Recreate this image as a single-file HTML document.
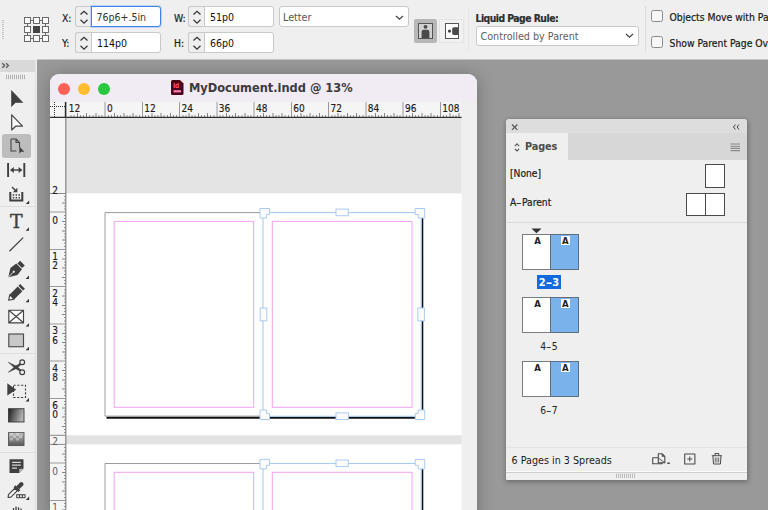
<!DOCTYPE html>
<html>
<head>
<meta charset="utf-8">
<title>MyDocument.indd</title>
<style>
*{box-sizing:border-box;margin:0;padding:0}
html,body{width:768px;height:510px;overflow:hidden;background:#999;font-family:"DejaVu Sans Condensed","DejaVu Sans","Liberation Sans",sans-serif;color:#222}
.abs{position:absolute}
#top{position:absolute;left:0;top:0;width:768px;height:59px;background:#efefef;border-bottom:1px solid #c6c6c6;box-sizing:content-box}
.lbl{position:absolute;font-size:10.300px;color:#1a1a1a;-webkit-text-stroke:.2px #1a1a1a;line-height:13px;white-space:nowrap}
.step{position:absolute;width:17px;height:21px;border:1px solid #c9c9c9;border-right:none;border-radius:3px 0 0 3px;background:#efefef}
.inp{position:absolute;height:21px;border:1px solid #c9c9c9;border-radius:0 3px 3px 0;background:#fff;font-size:10.500px;line-height:20px;padding-left:5px;color:#333;white-space:nowrap}
.sel{position:absolute;height:21px;border:1px solid #c9c9c9;border-radius:3px;background:#fff;font-size:10.700px;line-height:19px;padding-left:5px;color:#555;white-space:nowrap}
.vsep{position:absolute;width:1px;background:#dcdcdc}
.cb{position:absolute;width:12px;height:12px;border:1px solid #8a8a8a;border-radius:2.500px;background:#f7f7f7}
#tools{position:absolute;left:0;top:58px;width:37px;height:452px;background:#efefef}
#doc{position:absolute;left:50px;top:74px;width:426.500px;height:446px;background:#efefef;border-radius:9px 9px 0 0;overflow:hidden;box-shadow:0 2px 18px rgba(0,0,0,.27)}
#title{position:absolute;left:0;top:0;width:427px;height:28px;background:#f1ebf3}
.tl{position:absolute;top:8.700px;width:12px;height:12px;border-radius:50%}
#panel{position:absolute;left:506px;top:119px;width:241px;height:361px;background:#efefef;border-radius:3.500px 3.500px 1px 1px;overflow:hidden;box-shadow:.5px 1.500px 5px rgba(0,0,0,.3)}
#pin{position:absolute;left:0;top:.5px;width:241px;height:360px}
.pa{position:absolute;width:15px;text-align:center;font-size:9.500px;font-weight:bold;color:#222;line-height:11px}
.hy{display:inline-block;transform:scaleX(1.600);margin:0 1.200px}
</style>
</head>
<body>
<!-- TOPBAR -->

<div id="top">
  <!-- grip -->
  <svg class="abs" style="left:0;top:0" width="60" height="58" viewBox="0 0 60 58">
    <g fill="#c4c4c4"><rect x="2" y="20" width="2" height="1"/><rect x="2" y="22" width="2" height="1"/><rect x="2" y="24" width="2" height="1"/><rect x="2" y="26" width="2" height="1"/><rect x="2" y="28" width="2" height="1"/><rect x="2" y="30" width="2" height="1"/><rect x="2" y="32" width="2" height="1"/><rect x="2" y="34" width="2" height="1"/><rect x="2" y="36" width="2" height="1"/><rect x="2" y="38" width="2" height="1"/></g>
    <g fill="none" stroke="#6a6a6a" stroke-width="1">
      <path d="M27 20.5H46M27 38.5H46M27.5 20V38M45.5 20V38"/>
    </g>
    <g fill="#fafafa" stroke="#6a6a6a" stroke-width="1">
      <rect x="24.5" y="17.500" width="6" height="6"/><rect x="33.500" y="17.500" width="6" height="6"/><rect x="42.500" y="17.500" width="6" height="6"/>
      <rect x="24.5" y="26.500" width="6" height="6"/><rect x="42.500" y="26.500" width="6" height="6"/>
      <rect x="24.5" y="35.500" width="6" height="6"/><rect x="33.500" y="35.500" width="6" height="6"/><rect x="42.500" y="35.500" width="6" height="6"/>
    </g>
    <rect x="33" y="26" width="7" height="7" fill="#444"/>
  </svg>
  <div class="lbl" style="left:62px;top:12px">X:</div>
  <div class="lbl" style="left:62px;top:37px">Y:</div>
  <div class="step" style="left:75px;top:6px"><svg width="16" height="19" viewBox="0 0 16 19"><path d="M4.500 7.500L8 4.200L11.500 7.500M4.500 12.800L8 16.100L11.500 12.800" fill="none" stroke="#333" stroke-width="1.200"/></svg></div>
  <div class="inp" style="left:91px;top:6px;width:70px;border:1.500px solid #3b83e8;box-shadow:0 0 0 1px rgba(59,131,232,.25);line-height:20.500px;padding-left:4.500px">76p6+.5in</div>
  <div class="step" style="left:75px;top:32px"><svg width="16" height="19" viewBox="0 0 16 19"><path d="M4.500 7.500L8 4.200L11.500 7.500M4.500 12.800L8 16.100L11.500 12.800" fill="none" stroke="#333" stroke-width="1.200"/></svg></div>
  <div class="inp" style="left:91px;top:32px;width:70px;color:#111">114p0</div>
  <div class="lbl" style="left:174px;top:12px">W:</div>
  <div class="lbl" style="left:174px;top:37px">H:</div>
  <div class="step" style="left:187.500px;top:6px"><svg width="16" height="19" viewBox="0 0 16 19"><path d="M4.500 7.500L8 4.200L11.500 7.500M4.500 12.800L8 16.100L11.500 12.800" fill="none" stroke="#333" stroke-width="1.200"/></svg></div>
  <div class="inp" style="left:204px;top:6px;width:70px;color:#111">51p0</div>
  <div class="step" style="left:187.500px;top:32px"><svg width="16" height="19" viewBox="0 0 16 19"><path d="M4.500 7.500L8 4.200L11.500 7.500M4.500 12.800L8 16.100L11.500 12.800" fill="none" stroke="#333" stroke-width="1.200"/></svg></div>
  <div class="inp" style="left:204px;top:32px;width:70px;color:#111">66p0</div>
  <div class="sel" style="left:279px;top:6px;width:129.500px;padding-left:3px;line-height:21px">Letter<svg class="abs" style="right:3.500px;top:8px" width="9" height="6" viewBox="0 0 9 6"><path d="M1 1L4.500 4.300L8 1" fill="none" stroke="#444" stroke-width="1.200"/></svg></div>
  <!-- orientation buttons -->
  <div class="abs" style="left:414px;top:19px;width:23px;height:24px;background:#b7b7b7;border-radius:2px"></div>
  <div class="abs" style="left:439px;top:19px;width:25px;height:24px;border:1px solid #e4e4e4;background:#f1f1f1"></div>
  <svg class="abs" style="left:410px;top:15px" width="60" height="32" viewBox="410 15 60 32">
    <rect x="418.500" y="23.500" width="14" height="15" fill="#d2d2d2" stroke="#555" stroke-width="1"/>
    <circle cx="425.500" cy="26.800" r="1.900" fill="#4a4a4a"/>
    <path d="M421.600 38V31.700Q421.600 29.800 423.600 29.800H427.400Q429.400 29.800 429.400 31.700V38Z" fill="#4a4a4a"/>
    <rect x="445.500" y="23.500" width="13" height="15" fill="#fff" stroke="#555" stroke-width="1"/>
    <circle cx="449.500" cy="31.100" r="1.700" fill="#4a4a4a"/>
    <path d="M458 27.300H453.800Q452.200 27.300 452.200 29V33.200Q452.200 34.900 453.800 34.900H458Z" fill="#4a4a4a"/>
  </svg>
  <div class="vsep" style="left:468px;top:8px;height:44px;background:#e6e6e6"></div>
  <div class="lbl" style="left:475.500px;top:12px;font-weight:bold;font-size:10.300px;letter-spacing:-.5px;color:#303030">Liquid Page Rule:</div>
  <div class="sel" style="left:475.500px;top:25.500px;width:163.500px;height:20.500px;line-height:19.500px;padding-left:4px;color:#5e5e5e">Controlled by Parent<svg class="abs" style="right:4px;top:6.500px" width="9" height="6" viewBox="0 0 9 6"><path d="M1 1L4.500 4.300L8 1" fill="none" stroke="#444" stroke-width="1.200"/></svg></div>
  <div class="vsep" style="left:644.500px;top:6px;height:46px"></div>
  <div class="cb" style="left:651px;top:10px"></div>
  <div class="cb" style="left:651px;top:36px"></div>
  <div class="lbl" style="left:669.500px;top:10.500px;font-size:10.300px">Objects Move with Parent</div>
  <div class="lbl" style="left:669.500px;top:36.500px;font-size:10.300px">Show Parent Page Overlay</div>
</div>

<!-- TOOLS -->

<div id="tools">
<div class="abs" style="left:0;top:2px;width:36px;height:11.500px;background:#d9d9d9"></div>
<div class="abs" style="left:35px;top:2px;width:1px;height:450px;background:#e1e1e1"></div>
<div class="abs" style="left:1.500px;top:76px;width:29.500px;height:23.500px;background:#bdbdbd;border-radius:2.500px"></div>
<div class="abs" style="left:0;top:148px;width:36px;height:1px;background:#dedede"></div>
<div class="abs" style="left:0;top:295px;width:36px;height:1px;background:#dedede"></div>
<div class="abs" style="left:0;top:394px;width:36px;height:1px;background:#dedede"></div>
<svg class="abs" style="left:0;top:0" width="37" height="452" viewBox="0 58 37 452">
  <defs>
    <linearGradient id="g1" x1="0" y1="0" x2="1" y2="0.250"><stop offset="0" stop-color="#1c1c1c"/><stop offset="1" stop-color="#b4b4b4"/></linearGradient>
    <linearGradient id="g2" x1="0" y1="0" x2="0" y2="1"><stop offset="0" stop-color="#c4c4c4"/><stop offset="1" stop-color="#555"/></linearGradient>
  </defs>
  <!-- >> -->
  <path d="M2.300 63.200L4.700 65.500L2.300 67.800M6.100 63.200L8.500 65.500L6.100 67.800" fill="none" stroke="#555" stroke-width="1.200"/>
  <!-- grip -->
  <g stroke="#b0b0b0" stroke-width="1"><path d="M6.500 74.700V79.200M8.500 74.700V79.200M10.500 74.700V79.200M12.500 74.700V79.200M14.500 74.700V79.200M16.500 74.700V79.200M18.500 74.700V79.200M20.500 74.700V79.200M22.500 74.700V79.200M24.500 74.700V79.200"/></g>
  <!-- selection -->
  <path d="M11.500 90.500V106.500L15.600 102.500H22.800Z" fill="#3f3f3f" stroke="#3f3f3f" stroke-width=".6" stroke-linejoin="round"/>
  <!-- direct selection -->
  <path d="M11.700 114.800V130L15.700 126.200H22.500Z" fill="#fbfbfb" stroke="#444" stroke-width="1.200" stroke-linejoin="round"/>
  <!-- page tool -->
  <path d="M11 139H16L19.500 142.500V147M16 139V142.500H19.500M11 139V151H16.500" fill="none" stroke="#444" stroke-width="1.100"/>
  <path d="M19.300 146.300V153.600L21.200 151.800H24.300Z" fill="#3f3f3f"/>
  <!-- gap tool -->
  <path d="M8.100 163V177M24.300 163V177" stroke="#3f3f3f" stroke-width="1.900"/>
  <path d="M11.500 170H21" stroke="#3f3f3f" stroke-width="1.400"/>
  <path d="M10 170L13.800 166.900V173.100ZM22.400 170L18.600 166.900V173.100Z" fill="#3f3f3f"/>
  <!-- content collector -->
  <path d="M10.300 192V200.500H22.300V192" fill="none" stroke="#3f3f3f" stroke-width="2"/>
  <path d="M12.700 194.200h1.500v1.500h-1.500zM15.600 194.200h1.500v1.500h-1.500zM18.500 194.200h1.500v1.500h-1.500zM12.700 197h1.500v1.500h-1.500zM15.600 197h1.500v1.500h-1.500zM18.500 197h1.500v1.500h-1.500z" fill="#3f3f3f"/>
  <path d="M12 187L16 191" stroke="#3f3f3f" stroke-width="1.500"/>
  <path d="M17.300 187.800V192.200H12.900Z" fill="#3f3f3f"/>
  <path d="M29.2 200.5V203.9H25.8Z" fill="#333"/>
  <!-- T -->
  <text x="16.300" y="227.600" text-anchor="middle" font-family="'DejaVu Serif','Liberation Serif',serif" font-size="19" fill="#3f3f3f" stroke="#3f3f3f" stroke-width=".35">T</text>
  <path d="M29.0 227.3V230.7H25.6Z" fill="#333"/>
  <!-- line -->
  <path d="M9.400 251.300L23.200 237.600" stroke="#3f3f3f" stroke-width="1.200"/>
  <!-- pen -->
  <g transform="translate(15 270.500) rotate(45)">
    <rect x="-3.300" y="-10.500" width="6.600" height="3.800" fill="#3f3f3f"/>
    <path d="M-4 -5.800H4L5 1.500L0 9.500L-5 1.500Z" fill="#3f3f3f"/>
    <path d="M0 9.500V2.500" stroke="#efefef" stroke-width=".9"/>
    <circle cx="0" cy="1.700" r="1.100" fill="#efefef"/>
  </g>
  <path d="M29.0 275.5V278.9H25.6Z" fill="#333"/>
  <!-- pencil -->
  <g transform="translate(15.600 293.300) rotate(45) scale(.95)">
    <path d="M-3.500 -10.300H3.500V-7.600H-3.500Z" fill="#3f3f3f"/>
    <path d="M-3.500 -6.600H3.500V5.500H-3.500Z" fill="#3f3f3f"/>
    <path d="M-3.200 5.500H3.200L0 10.300Z" fill="#f4f4f4" stroke="#3f3f3f" stroke-width="1.200" stroke-linejoin="round"/>
  </g>
  <path d="M29.0 298.8V302.2H25.6Z" fill="#333"/>
  <!-- rect frame -->
  <path d="M8.800 310.200H23.500V322.800H8.800ZM8.800 310.200L23.500 322.800M23.500 310.200L8.800 322.800" fill="#fafafa" stroke="#444" stroke-width="1.150"/>
  <path d="M29.0 323.2V326.6H25.6Z" fill="#333"/>
  <!-- rectangle -->
  <rect x="8.800" y="334" width="14.700" height="12.700" fill="#c8c8c8" stroke="#4c4c4c" stroke-width="1.150"/>
  <path d="M29.0 346.8V350.2H25.6Z" fill="#333"/>
  <!-- scissors -->
  <path d="M8.300 362.300L16.500 366.200L20.900 369.900L19.900 371.100L15.300 368.400Z" fill="#3f3f3f" stroke="#3f3f3f" stroke-width=".5" stroke-linejoin="round"/><path d="M8.300 372.300L16.500 368.400L20.900 364.700L19.900 363.500L15.300 366.200Z" fill="#3f3f3f" stroke="#3f3f3f" stroke-width=".5" stroke-linejoin="round"/>
  <circle cx="22.200" cy="362.300" r="2.400" fill="#f4f4f4" stroke="#3f3f3f" stroke-width="1.200"/>
  <circle cx="22.200" cy="372.300" r="2.400" fill="#f4f4f4" stroke="#3f3f3f" stroke-width="1.200"/>
  <!-- free transform -->
  <rect x="13.500" y="385.200" width="12" height="12.300" fill="none" stroke="#3f3f3f" stroke-width="1.100" stroke-dasharray="2.200 1.600"/>
  <path d="M7.300 383.200V395.600L16.200 389.700Z" fill="#3f3f3f"/>
  <path d="M29.0 398V401.4H25.6Z" fill="#333"/>
  <!-- gradient -->
  <rect x="8.500" y="408.700" width="15.500" height="13.300" fill="url(#g1)" stroke="#3a3a3a" stroke-width=".9"/>
  <!-- gradient feather -->
  <rect x="8.500" y="432.600" width="15.500" height="13" fill="url(#g2)" stroke="#555" stroke-width=".9"/>
  <path d="M10 433h3v2.500h-3zM16 433h3v2.500h-3zM13 435.500h3v2.500h-3zM19 435.500h3v2.500h-3zM10 438h3v2.500h-3zM16 438h3v2.500h-3z" fill="#fff" opacity=".35"/>
  <!-- note -->
  <path d="M9.500 459.200H23.500V468.700L19.200 473.100H9.500Z" fill="#3f3f3f"/>
  <path d="M12 462.300H20.800M12 465.200H20.800M12 468.100H17" stroke="#d6d6d6" stroke-width="1.300"/>
  <path d="M19.200 473.100V468.700H23.500Z" fill="#b4b4b4"/>
  <!-- eyedropper -->
  <g transform="translate(14.900 490.700) rotate(45) scale(.87)">
    <path d="M-2 -2V8.500L0 11L2 8.500V-2Z" fill="#f6f6f6" stroke="#3f3f3f" stroke-width="1.300" stroke-linejoin="round"/>
    <rect x="-3.900" y="-4.800" width="7.800" height="3" fill="#3f3f3f"/>
    <path d="M-2.400 -10.800Q-2.400 -13 0 -13Q2.400 -13 2.400 -10.800V-4.600H-2.400Z" fill="#3f3f3f"/>
  </g>
  <rect x="16.200" y="494.200" width="9.300" height="4" fill="#3f3f3f"/>
  <path d="M17.200 495.200h1.800v2h-1.800zM20 495.200h1.800v2h-1.800zM22.800 495.200h1.800v2h-1.800z" fill="#e8e8e8"/>
  <path d="M29.2 496.5V499.9H25.8Z" fill="#333"/>
  <!-- hand -->
  <path d="M13.500 510V508M16 510V506.500M18.500 510V507.200M21 510V508.500" stroke="#3f3f3f" stroke-width="1.300"/>
</svg>
</div>

<!-- DOC -->
<div id="doc">
<div id="title">
  <div class="tl" style="left:8.200px;background:#fe5f57"></div>
  <div class="tl" style="left:28.200px;background:#febc2e"></div>
  <div class="tl" style="left:48px;background:#28c840"></div>
  <svg class="abs" style="left:121px;top:6px" width="13" height="15" viewBox="0 0 13 15"><path d="M1.500 0H9L12.500 3.500V13.500Q12.500 15 11 15H1.500Q0 15 0 13.500V1.500Q0 0 1.500 0Z" fill="#4b0420"/><text x="2.200" y="8" font-size="6.500" font-weight="bold" fill="#ff5fa2" font-family="'Liberation Sans',sans-serif">Id</text><rect x="2.500" y="10.200" width="7.500" height="2.200" fill="#ff7fb5"/></svg>
  <div class="abs" style="left:139px;top:6px;font-size:12.700px;font-weight:bold;color:#3c3a3d;line-height:16px;white-space:nowrap">MyDocument.indd @ 13%</div>
</div>
<svg class="abs" style="left:0;top:0" width="426" height="436" viewBox="50 74 426 436" font-family="'DejaVu Sans Condensed','DejaVu Sans','Liberation Sans',sans-serif">
<rect x="66" y="117" width="395.600" height="393" fill="#fff"/>
<rect x="66" y="117" width="395.600" height="76.400" fill="#e4e4e4"/>
<rect x="66" y="435.300" width="395.600" height="9" fill="#e2e2e2"/>
<rect x="50" y="102" width="411.600" height="15.500" fill="#f5f5f5"/>
<rect x="50" y="117" width="16" height="393" fill="#f5f5f5"/>
<path d="M71 115V117M74 115V117M80.5 115V117M83.5 115V117M89.5 115V117M93 115V117M99 115V117M102 115V117M108.5 115V117M111.5 115V117M117.5 115V117M120.5 115V117M127 115V117M130 115V117M136 115V117M139.5 115V117M145.5 115V117M148.5 115V117M155 115V117M158 115V117M164 115V117M167.5 115V117M173.5 115V117M176.5 115V117M183 115V117M186 115V117M192 115V117M195 115V117M201.5 115V117M204.5 115V117M210.5 115V117M214 115V117M220 115V117M223 115V117M229.5 115V117M232.5 115V117M238.5 115V117M242 115V117M248 115V117M251 115V117M257.5 115V117M260.5 115V117M266.5 115V117M269.5 115V117M276 115V117M279 115V117M285 115V117M288.5 115V117M294.5 115V117M297.5 115V117M304 115V117M307 115V117M313 115V117M316.5 115V117M322.5 115V117M325.5 115V117M332 115V117M335 115V117M341 115V117M344 115V117M350.5 115V117M353.5 115V117M359.5 115V117M363 115V117M369 115V117M372 115V117M378.5 115V117M381.5 115V117M387.5 115V117M391 115V117M397 115V117M400 115V117M406.5 115V117M409.5 115V117M415.5 115V117M418.5 115V117M425 115V117M428 115V117M434 115V117M437.5 115V117M443.5 115V117M446.5 115V117M453 115V117M456 115V117" stroke="#7a7a7a" stroke-width=".8"/>
<path d="M77.5 113V117M86.5 113V117M96 113V117M114.5 113V117M124 113V117M133 113V117M152 113V117M161 113V117M170.5 113V117M189 113V117M198.5 113V117M207.5 113V117M226.5 113V117M235.5 113V117M245 113V117M263.5 113V117M273 113V117M282 113V117M301 113V117M310 113V117M319.5 113V117M338 113V117M347.5 113V117M356.5 113V117M375.5 113V117M384.5 113V117M394 113V117M412.5 113V117M422 113V117M431 113V117M450 113V117M459 113V117" stroke="#777" stroke-width=".9"/>
<path d="M105 102V117M142.5 102V117M179.5 102V117M217 102V117M254 102V117M291.5 102V117M328.5 102V117M366 102V117M403 102V117M440.5 102V117" stroke="#9a9a9a" stroke-width="1"/>
<g font-size="10" fill="#1c1c1c" stroke="#1c1c1c" stroke-width=".15">
<text x="68.700" y="111.700">12</text>
<text x="107.1" y="111.700">0</text>
<text x="144.35" y="111.700">12</text>
<text x="181.6" y="111.700">24</text>
<text x="218.85" y="111.700">36</text>
<text x="256.1" y="111.700">48</text>
<text x="293.35" y="111.700">60</text>
<text x="330.6" y="111.700">72</text>
<text x="367.85" y="111.700">84</text>
<text x="405.1" y="111.700">96</text>
<text x="442.35" y="111.700">108</text>
</g>
<path d="M64 196.5H66M64 200H66M64 206H66M64 209H66M64 215.5H66M64 218.5H66M64 224.5H66M64 227.5H66M64 234H66M64 237H66M64 243H66M64 246.5H66M64 252.5H66M64 255.5H66M64 262H66M64 265H66M64 271H66M64 274.5H66M64 280.5H66M64 283.5H66M64 290H66M64 293H66M64 299H66M64 302H66M64 308.5H66M64 311.5H66M64 317.5H66M64 321H66M64 327H66M64 330H66M64 336.5H66M64 339.5H66M64 345.5H66M64 349H66M64 355H66M64 358H66M64 364.5H66M64 367.5H66M64 373.5H66M64 376.5H66M64 383H66M64 386H66M64 392H66M64 395.5H66M64 401.5H66M64 404.5H66M64 411H66M64 414H66M64 420H66M64 423.5H66M64 429.5H66M64 432.5H66" stroke="#7a7a7a" stroke-width=".8"/>
<path d="M62 203H66M62 221.5H66M62 231H66M62 240H66M62 259H66M62 268H66M62 277.5H66M62 296H66M62 305.5H66M62 314.5H66M62 333.5H66M62 342.5H66M62 352H66M62 370.5H66M62 380H66M62 389H66M62 408H66M62 417H66M62 426.5H66" stroke="#777" stroke-width=".9"/>
<path d="M50 212H66M50 249.5H66M50 286.5H66M50 324H66M50 361H66M50 398.5H66" stroke="#9a9a9a" stroke-width="1"/>
<path d="M64 447.5H66M64 451H66M64 457H66M64 460H66M64 466.5H66M64 469.5H66M64 475.5H66M64 478.5H66M64 485H66M64 488H66M64 494H66M64 497.5H66M64 503.5H66M64 506.5H66" stroke="#7a7a7a" stroke-width=".8"/>
<path d="M62 454H66M62 472.5H66M62 482H66M62 491H66M62 510H66" stroke="#777" stroke-width=".9"/>
<path d="M50 463H66M50 500.5H66" stroke="#9a9a9a" stroke-width="1"/>
<path d="M50 193.500H66M50 435.300H66M50 444.400H66" stroke="#8a8a8a" stroke-width="1"/>
<g font-size="10" fill="#1c1c1c" stroke="#1c1c1c" stroke-width=".15" text-anchor="middle">
<text x="55.200" y="193.8">2</text>
<text x="55.200" y="444.5" fill="#5c5c5c" stroke="none">2</text>
<text x="55.200" y="223.7">0</text>
<text x="55.200" y="259.9">1</text>
<text x="55.200" y="269.2">2</text>
<text x="55.200" y="297.2">2</text>
<text x="55.200" y="306.4">4</text>
<text x="55.200" y="334.4">3</text>
<text x="55.200" y="343.7">6</text>
<text x="55.200" y="371.7">4</text>
<text x="55.200" y="380.9">8</text>
<text x="55.200" y="408.9">6</text>
<text x="55.200" y="418.2">0</text>
<text x="55.200" y="474.7" fill="#5c5c5c" stroke="none">0</text>
<text x="55.200" y="510.9" fill="#5c5c5c" stroke="none">1</text>
</g>
<path d="M50 117.400H461.600" stroke="#2e2e2e" stroke-width="1.100"/>
<path d="M65.800 117V510" stroke="#8c8c8c" stroke-width="1.300"/>
<path d="M65.600 102V118" stroke="#2e2e2e" stroke-width="1.600"/>
<path d="M50 106.500H65M54.500 102V117" stroke="#333" stroke-width="1" stroke-dasharray="1 1"/>
<path d="M106.500 417.7H423M422.200 214.3V418.7" stroke="#111" stroke-width="2.200" fill="none"/><rect x="104.7" y="212.3" width="316.8" height="204" fill="#fff"/><path d="M263.0 212.6H105.0V416.1H263.0" fill="none" stroke="#9c9c9c" stroke-width="1"/><rect x="114.200" y="221.4" width="139.500" height="185.900" fill="none" stroke="#f4a2f4" stroke-width="1"/><rect x="272.300" y="221.4" width="139.700" height="185.900" fill="none" stroke="#f4a2f4" stroke-width="1"/><rect x="263.0" y="212.6" width="158.2" height="203.700" fill="none" stroke="#a9ccf3" stroke-width="1.100"/><path d="M260 208.5H269.500V214.5H266.500V218H260Z" fill="#fdfcfa" stroke="#a9ccf3" stroke-width="1"/><path d="M424.700 208.5H415.200V214.5H418.200V218H424.700Z" fill="#fdfcfa" stroke="#a9ccf3" stroke-width="1"/><path d="M260 419.5H269.500V413.5H266.500V410H260Z" fill="#fdfcfa" stroke="#a9ccf3" stroke-width="1"/><path d="M424.700 419.5H415.200V413.5H418.200V410H424.700Z" fill="#fdfcfa" stroke="#a9ccf3" stroke-width="1"/><rect x="336" y="209.1" width="12.300" height="6.600" fill="#fdfcfa" stroke="#a9ccf3" stroke-width="1"/><rect x="336" y="412.9" width="12.300" height="6.600" fill="#fdfcfa" stroke="#a9ccf3" stroke-width="1"/><rect x="260.200" y="308" width="6.600" height="12.800" fill="#fdfcfa" stroke="#a9ccf3" stroke-width="1"/><rect x="417.800" y="308" width="6.600" height="12.800" fill="#fdfcfa" stroke="#a9ccf3" stroke-width="1"/>
<path d="M106.500 668.6H423M422.200 465.2V669.6" stroke="#111" stroke-width="2.200" fill="none"/><rect x="104.7" y="463.2" width="316.8" height="204" fill="#fff"/><path d="M263.0 463.5H105.0V667H263.0" fill="none" stroke="#9c9c9c" stroke-width="1"/><rect x="114.200" y="472.3" width="139.500" height="185.900" fill="none" stroke="#f4a2f4" stroke-width="1"/><rect x="272.300" y="472.3" width="139.700" height="185.900" fill="none" stroke="#f4a2f4" stroke-width="1"/><rect x="263.0" y="463.5" width="158.2" height="203.700" fill="none" stroke="#a9ccf3" stroke-width="1.100"/><path d="M260 459.4H269.500V465.4H266.500V468.9H260Z" fill="#fdfcfa" stroke="#a9ccf3" stroke-width="1"/><path d="M424.700 459.4H415.200V465.4H418.200V468.9H424.700Z" fill="#fdfcfa" stroke="#a9ccf3" stroke-width="1"/><path d="M260 670.4H269.500V664.4H266.500V660.9H260Z" fill="#fdfcfa" stroke="#a9ccf3" stroke-width="1"/><path d="M424.700 670.4H415.200V664.4H418.200V660.9H424.700Z" fill="#fdfcfa" stroke="#a9ccf3" stroke-width="1"/><rect x="336" y="460" width="12.300" height="6.600" fill="#fdfcfa" stroke="#a9ccf3" stroke-width="1"/><rect x="336" y="663.8" width="12.300" height="6.600" fill="#fdfcfa" stroke="#a9ccf3" stroke-width="1"/><rect x="260.200" y="558.9" width="6.600" height="12.800" fill="#fdfcfa" stroke="#a9ccf3" stroke-width="1"/><rect x="417.800" y="558.9" width="6.600" height="12.800" fill="#fdfcfa" stroke="#a9ccf3" stroke-width="1"/>
</svg>
</div>
<!-- PANEL -->
<div id="panel"><div id="pin">
<div class="abs" style="left:0;top:-1px;width:241px;height:14px;background:#dddddd"></div>
<div class="abs" style="left:0;top:13px;width:241px;height:27px;background:#d7d7d7"></div>
<div class="abs" style="left:0;top:13px;width:62px;height:27px;background:#efefef"></div>
<svg class="abs" style="left:0;top:0" width="241" height="40" viewBox="506 119.500 241 40">
  <path d="M512 124L517.400 129.400M517.400 124L512 129.400" stroke="#5a5a5a" stroke-width="1.250" fill="none"/>
  <path d="M735.400 124L733.500 126.500L735.400 129M739 124L737.100 126.500L739 129" stroke="#444" stroke-width="1" fill="none"/>
  <path d="M514.800 145.600L517 143.400L519.200 145.600M514.800 148.300L517 150.500L519.200 148.300" stroke="#555" stroke-width="1.100" fill="none"/>
  <path d="M730.500 143.500H740M730.500 145.700H740M730.500 147.900H740M730.500 150.100H740" stroke="#8a8a8a" stroke-width="1.100"/>
</svg>
<div class="abs" style="left:19px;top:20.700px;font-size:10.800px;font-weight:bold;color:#4c4c4c;line-height:14px;letter-spacing:-.1px">Pages</div>
<div class="abs" style="left:4px;top:47px;font-size:10.200px;color:#1c1c1c;line-height:13px;-webkit-text-stroke:.2px #1c1c1c">[None]</div>
<div class="abs" style="left:4px;top:76px;font-size:10.200px;color:#1c1c1c;line-height:13px;-webkit-text-stroke:.2px #1c1c1c">A<span class="hy">-</span>Parent</div>
<div class="abs" style="left:199px;top:44.500px;width:20px;height:23.500px;background:#fff;border:1px solid #4a4a4a"></div>
<div class="abs" style="left:180px;top:73px;width:39px;height:23.500px;background:#fff;border:1px solid #4a4a4a"></div>
<div class="abs" style="left:199px;top:73px;width:1px;height:23.500px;background:#4a4a4a"></div>
<div class="abs" style="left:0;top:102px;width:241px;height:1px;background:#dadada"></div>
<svg class="abs" style="left:25px;top:108px" width="12" height="6" viewBox="0 0 12 6"><path d="M0.500 0.500H10.500L5.500 5.300Z" fill="#333"/></svg>
<div class="abs" style="left:16px;top:114px;width:57px;height:36px;background:#fff;border:1px solid #7c7c7c"></div>
<div class="abs" style="left:44px;top:114px;width:29px;height:36px;background:#7ab3ec;border:1px solid #5f6f80"></div>
<div class="abs" style="left:55px;top:116px;width:9px;height:9.500px;background:#fff"></div>
<div class="pa" style="left:24px;top:115px">A</div><div class="pa" style="left:51.800px;top:115px">A</div>
<div class="abs" style="left:31px;top:155.500px;width:24px;height:13.500px;background:#1569de"></div>
<div class="abs" style="left:31px;top:156px;width:24px;text-align:center;font-size:11px;font-weight:bold;color:#fff;line-height:13px">2<span class="hy">-</span>3</div>
<div class="abs" style="left:16px;top:177px;width:57px;height:36px;background:#fff;border:1px solid #7c7c7c"></div>
<div class="abs" style="left:44px;top:177px;width:29px;height:36px;background:#7ab3ec;border:1px solid #5f6f80"></div>
<div class="abs" style="left:55px;top:179px;width:9px;height:9.500px;background:#fff"></div>
<div class="pa" style="left:24px;top:178px">A</div><div class="pa" style="left:51.800px;top:178px">A</div>
<div class="abs" style="left:25px;top:220px;width:36px;text-align:center;font-size:10.200px;color:#222;line-height:13px">4<span class="hy">-</span>5</div>
<div class="abs" style="left:16px;top:241px;width:57px;height:36px;background:#fff;border:1px solid #7c7c7c"></div>
<div class="abs" style="left:44px;top:241px;width:29px;height:36px;background:#7ab3ec;border:1px solid #5f6f80"></div>
<div class="abs" style="left:55px;top:243px;width:9px;height:9.500px;background:#fff"></div>
<div class="pa" style="left:24px;top:242px">A</div><div class="pa" style="left:51.800px;top:242px">A</div>
<div class="abs" style="left:25px;top:284px;width:36px;text-align:center;font-size:10.200px;color:#222;line-height:13px">6<span class="hy">-</span>7</div>
<div class="abs" style="left:0;top:327px;width:241px;height:1px;background:#e4e4e4"></div>
<div class="abs" style="left:5.500px;top:334.500px;font-size:10.700px;color:#1c1c1c;line-height:13px;white-space:nowrap">6 Pages in 3 Spreads</div>
<svg class="abs" style="left:140px;top:329.500px" width="90" height="20" viewBox="646 449.500 90 20">
  <g fill="none" stroke="#4a4a4a" stroke-width="1.100" stroke-linejoin="round">
    <path d="M658 458.200H652.700V464.200H662V463.400"/>
    <path d="M658.300 454.300H662.300L664.800 456.800V463.300H658.300ZM662.300 454.300V456.800H664.800"/>
    <path d="M658.300 458.500L664.800 463.300" stroke-width=".9"/>
    <rect x="684.700" y="454.500" width="10.200" height="10"/>
    <path d="M687.300 459.500H692.300M689.800 457V462" stroke-width="1"/>
    <path d="M711.800 456.200H722M715 456V454H718.800V456M712.900 456.500L713.500 464.500H720.400L721 456.500" stroke-width="1"/><path d="M715.200 458V463M716.950 458V463M718.700 458V463" stroke-width=".8"/>
  </g>
  <rect x="667.300" y="463" width="2.500" height="1.500" fill="#4a4a4a"/>
</svg>
<div class="abs" style="left:0;top:351.500px;width:241px;height:1px;background:#fafafa"></div>
<div class="abs" style="left:0;top:352.500px;width:241px;height:1px;background:#cfcfcf"></div>
<svg class="abs" style="left:109px;top:353px" width="22" height="6" viewBox="0 0 22 6"><path d="M1.500 .5V5M3.500 .5V5M5.500 .5V5M7.500 .5V5M9.500 .5V5M11.500 .5V5M13.500 .5V5M15.500 .5V5M17.500 .5V5M19.500 .5V5" stroke="#bcbcbc" stroke-width="1"/></svg>
</div></div>
</body>
</html>
